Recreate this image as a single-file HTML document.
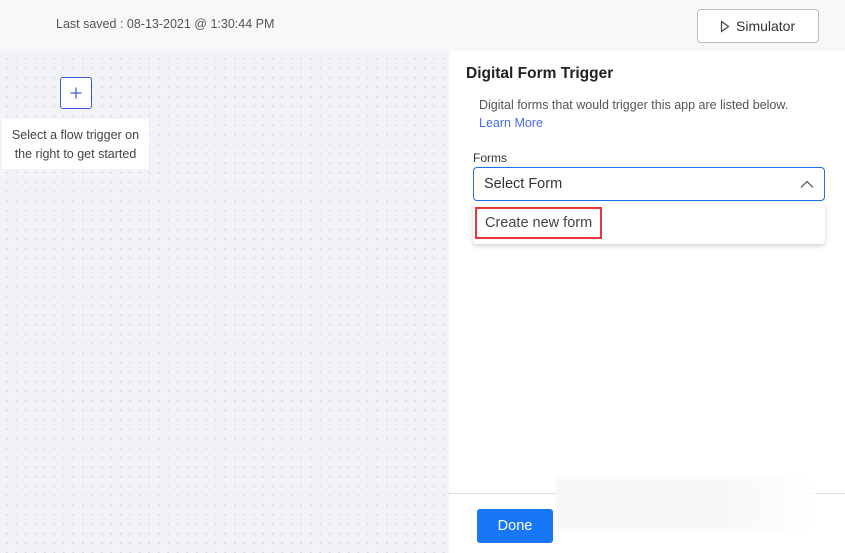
<!DOCTYPE html>
<html><head><style>
*{margin:0;padding:0;box-sizing:border-box}
body{width:845px;height:553px;overflow:hidden;font-family:"Liberation Sans",sans-serif;background:#fff;position:relative}
.hdr{position:absolute;left:0;top:0;width:845px;height:51px;background:#f8f8f9}
.saved{position:absolute;left:56px;top:17px;font-size:12.5px;color:#555}
.sim{position:absolute;left:697px;top:9px;width:122px;height:34px;border:1px solid #bbb;border-radius:4px;background:#fff;font-size:14px;color:#333}
.sim span{position:absolute;left:38px;top:8px}
.canvas{position:absolute;left:0;top:51px;width:449px;height:502px;background-color:#f2f3f6;background-image:radial-gradient(circle,#d6d8dc 0.8px,transparent 1.1px);background-size:9.5px 9.5px;background-position:2px 3px}
.plus{position:absolute;left:60px;top:77px;width:32px;height:32px;border:1px solid #3b5bdb;border-radius:3px;background:#fff}
.tip{position:absolute;left:2px;top:119px;width:147px;height:50px;background:#fff;font-size:12.5px;color:#444;text-align:center;line-height:18.5px;padding-top:7px}
.panel{position:absolute;left:449px;top:51px;width:396px;height:502px;background:#fff}
h1{position:absolute;left:466px;top:65px;font-size:15.5px;font-weight:bold;color:#222}
.desc{position:absolute;left:479px;top:96px;font-size:12.5px;color:#555;line-height:18px}
.desc a{color:#4a6cf7;text-decoration:none}
.lbl{position:absolute;left:473px;top:151px;font-size:12px;color:#333}
.sel{position:absolute;left:473px;top:167px;width:352px;height:34px;border:1px solid #1a73e8;border-radius:4px;font-size:14.5px;color:#333}
.sel span{position:absolute;left:10px;top:8px}
.dd{position:absolute;left:473px;top:202px;width:352px;height:42px;background:#fff;box-shadow:0 2px 5px rgba(0,0,0,.18);border-radius:3px}
.opt{position:absolute;left:475px;top:207px;width:127px;height:32px;border:2px solid #e8383d;font-size:14.5px;color:#444;padding:6px 0 0 8px}
.line{position:absolute;left:449px;top:493px;width:396px;height:1px;background:#ddd}
.blur{position:absolute;left:556px;top:478px;width:259px;height:52px;background:linear-gradient(90deg,#f6f6f7 60%,#fff);filter:blur(2px)}
.done{position:absolute;left:477px;top:509px;width:76px;height:34px;background:#1877f7;border-radius:3px;color:#fff;font-size:14.5px;text-align:center;line-height:34px}
</style></head><body>
<div class="hdr"></div>
<div class="saved">Last saved : 08-13-2021 @ 1:30:44 PM</div>
<div class="sim"><svg style="position:absolute;left:22px;top:10px" width="10" height="13" viewBox="0 0 10 13"><path d="M1.5 1.5 L8.5 6.5 L1.5 11.5 Z" fill="none" stroke="#444" stroke-width="1.2"/></svg><span>Simulator</span></div>
<div class="canvas"></div>
<div class="plus"><svg style="position:absolute;left:9px;top:9px" width="12" height="12" viewBox="0 0 12 12"><path d="M6 0.5V11.5M0.5 6H11.5" stroke="#3b5bdb" stroke-width="1.2"/></svg></div>
<div class="tip">Select a flow trigger on<br>the right to get started</div>
<div class="panel"></div>
<h1>Digital Form Trigger</h1>
<div class="desc">Digital forms that would trigger this app are listed below.<br><a>Learn More</a></div>
<div class="lbl">Forms</div>
<div class="sel"><span>Select Form</span><svg style="position:absolute;right:10px;top:12px" width="14" height="9" viewBox="0 0 14 9"><path d="M1 7.5 L7 1.5 L13 7.5" fill="none" stroke="#666" stroke-width="1.4"/></svg></div>
<div class="dd"></div>
<div class="opt">Create new form</div>
<div class="line"></div>
<div class="blur"></div>
<div class="done">Done</div>
</body></html>
